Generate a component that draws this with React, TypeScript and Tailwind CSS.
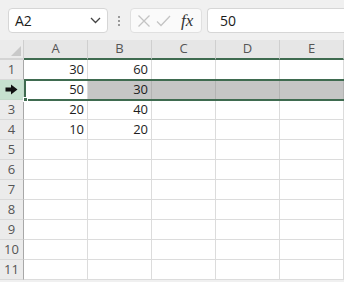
import React from 'react'

const cols = ['A', 'B', 'C', 'D', 'E']
const data: Record<number, [string, string]> = {
  1: ['30', '60'],
  2: ['50', '30'],
  3: ['20', '40'],
  4: ['10', '20'],
}
const rows = [1, 2, 3, 4, 5, 6, 7, 8, 9, 10, 11]

function Toolbar() {
  return (
    <div className="flex h-[40px] items-start pt-[8px] pl-[8px] gap-0">
      <div className="flex h-[25px] w-[100px] items-center justify-between rounded-[4px] border border-[#d6d6d6] bg-white pl-[6px] pr-[6px]">
        <span className="text-[14px] text-[#1b1b1b]">A2</span>
        <svg width="11" height="7" viewBox="0 0 11 7">
          <path d="M1 1l4.5 4.5L10 1" fill="none" stroke="#444" strokeWidth="1.3" />
        </svg>
      </div>
      <div className="flex h-[25px] w-[22px] flex-col items-center justify-center gap-[2px]">
        <span className="h-[2px] w-[2px] bg-[#9a9a9a]" />
        <span className="h-[2px] w-[2px] bg-[#9a9a9a]" />
        <span className="h-[2px] w-[2px] bg-[#9a9a9a]" />
      </div>
      <div className="flex h-[25px] w-[72px] items-center rounded-[4px] border border-[#e0e0e0] bg-[#fafafa] pl-[6px]">
        <svg width="14" height="14" viewBox="0 0 14 14">
          <path d="M1.5 1.5l11 11M12.5 1.5l-11 11" stroke="#c4c4c4" strokeWidth="1.3" />
        </svg>
        <svg className="ml-[5px]" width="15" height="12" viewBox="0 0 15 12">
          <path d="M1 6.5l4 4L14 1" fill="none" stroke="#c4c4c4" strokeWidth="1.3" />
        </svg>
        <span className="ml-[10px] font-['Liberation_Serif',serif] text-[17px] italic leading-none text-[#333]">fx</span>
      </div>
      <div className="ml-[5px] flex h-[25px] flex-1 items-center rounded-l-[4px] border border-r-0 border-[#d6d6d6] bg-white pl-[12px]">
        <span className="text-[14px] text-[#1b1b1b]">50</span>
      </div>
    </div>
  )
}

function HeaderRow() {
  return (
    <div className="flex h-[20px]">
      <div className="relative h-[20px] w-[24px] bg-[#ebebeb] border-r border-[#cfcfcf] border-b-2 border-b-[#d4d4d4]">
        <svg className="absolute right-[2px] bottom-[2px]" width="10" height="10" viewBox="0 0 10 10">
          <path d="M10 0L10 10L0 10Z" fill="#c9c9c9" />
        </svg>
      </div>
      {cols.map((c) => (
        <div
          key={c}
          className="flex h-[20px] w-[64px] items-center justify-center border-r border-[#cfcfcf] border-b-2 border-b-[#3f6b50] bg-[#e6e6e6] text-[13px] text-[#555]"
        >
          {c}
        </div>
      ))}
    </div>
  )
}

function Row({ n }: { n: number }) {
  const sel = n === 2
  const vals = data[n]
  return (
    <div className="flex h-[20px]">
      <div
        className={
          sel
            ? 'flex h-[20px] w-[24px] items-center justify-center border-r border-b border-[#c2d9c9] bg-[#c6e1cf]'
            : 'flex h-[20px] w-[24px] items-center justify-center border-r border-r-[#a8a8a8] border-b border-[#d9d9d9] bg-[#ebebeb] text-[13px] text-[#555]'
        }
      >
        {sel ? (
          <svg width="13" height="11" viewBox="0 0 13 11">
            <path d="M0.5 3.5H6V0.5L12.5 5.5L6 10.5V7.5H0.5Z" fill="#111" />
          </svg>
        ) : (
          n
        )}
      </div>
      {cols.map((c, i) => (
        <div
          key={c}
          className={
            'flex h-[20px] w-[64px] items-center justify-end border-r border-b border-[#dcdcdc] pr-[3px] text-[13px] text-[#1e1e1e] ' +
            (sel && i > 0 ? 'bg-[#c6c6c6] border-r-[#b3b3b3]' : 'bg-white')
          }
        >
          {vals && i < 2 ? vals[i] : ''}
        </div>
      ))}
    </div>
  )
}

export default function App() {
  return (
    <div className="h-[282px] w-[344px] overflow-hidden bg-[#f0f0f0] font-['Open_Sans','Liberation_Sans',sans-serif]">
      <Toolbar />
      <div className="relative">
        <HeaderRow />
        {rows.map((n) => (
          <Row key={n} n={n} />
        ))}
        <div className="pointer-events-none absolute left-[24px] top-[39px] h-[22px] w-[322px] border-2 border-[#3f6b50]" />
        <div className="absolute left-[23px] top-[57px] h-[5px] w-[5px] border border-white bg-[#3f6b50]" />
      </div>
    </div>
  )
}
